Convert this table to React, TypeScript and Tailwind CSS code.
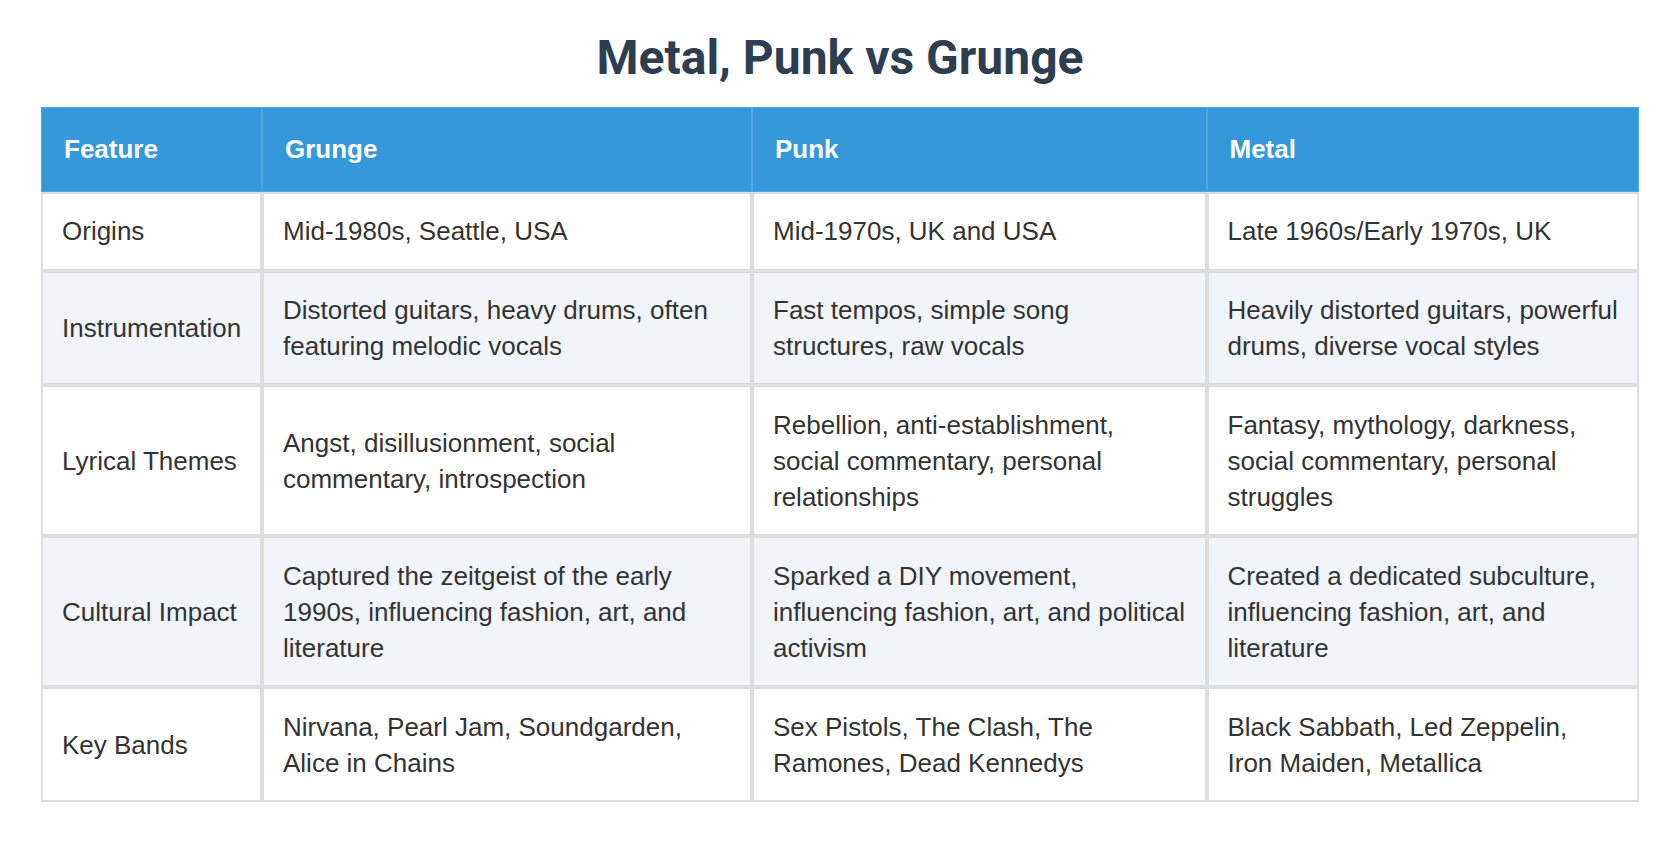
import React from "react";

const rows: { feature: string; grunge: string; punk: string; metal: string }[] = [
  {
    feature: "Origins",
    grunge: "Mid-1980s, Seattle, USA",
    punk: "Mid-1970s, UK and USA",
    metal: "Late 1960s/Early 1970s, UK",
  },
  {
    feature: "Instrumentation",
    grunge: "Distorted guitars, heavy drums, often featuring melodic vocals",
    punk: "Fast tempos, simple song structures, raw vocals",
    metal: "Heavily distorted guitars, powerful drums, diverse vocal styles",
  },
  {
    feature: "Lyrical Themes",
    grunge: "Angst, disillusionment, social commentary, introspection",
    punk: "Rebellion, anti-establishment, social commentary, personal relationships",
    metal: "Fantasy, mythology, darkness, social commentary, personal struggles",
  },
  {
    feature: "Cultural Impact",
    grunge: "Captured the zeitgeist of the early 1990s, influencing fashion, art, and literature",
    punk: "Sparked a DIY movement, influencing fashion, art, and political activism",
    metal: "Created a dedicated subculture, influencing fashion, art, and literature",
  },
  {
    feature: "Key Bands",
    grunge: "Nirvana, Pearl Jam, Soundgarden, Alice in Chains",
    punk: "Sex Pistols, The Clash, The Ramones, Dead Kennedys",
    metal: "Black Sabbath, Led Zeppelin, Iron Maiden, Metallica",
  },
];

export default function App() {
  const th =
    "bg-[#3498db] text-white font-bold text-left align-middle px-[22px] py-[23.4px] border border-[#4fa6e0]";
  const td = "border-2 border-[#dddddd] px-[19px] py-[19.2px] align-middle text-[#333333]";
  return (
    <div
      className="min-h-[844px] bg-white pt-[30px] px-[41px]"
      style={{ fontFamily: '"Liberation Sans", Arial, sans-serif' }}
    >
      <h1
        className="text-center text-[48px] leading-[56px] font-bold text-[#2c3e50] mb-[21px]"
        style={{ fontFamily: 'Roboto, "Liberation Sans", sans-serif' }}
      >
        Metal, Punk vs Grunge
      </h1>
      <table className="w-full table-fixed border-separate border-spacing-0 text-[26px] leading-[36.2px]">
        <thead>
          <tr>
            <th className={`${th} w-[221px]`}>Feature</th>
            <th className={`${th} w-[490px]`}>Grunge</th>
            <th className={`${th} w-[454.5px]`}>Punk</th>
            <th className={th}>Metal</th>
          </tr>
        </thead>
        <tbody>
          {rows.map((r, i) => (
            <tr key={r.feature} className={i % 2 === 1 ? "bg-[#f1f4f9]" : "bg-white"}>
              <td className={td}>{r.feature}</td>
              <td className={td}>{r.grunge}</td>
              <td className={td}>{r.punk}</td>
              <td className={td}>{r.metal}</td>
            </tr>
          ))}
        </tbody>
      </table>
    </div>
  );
}
